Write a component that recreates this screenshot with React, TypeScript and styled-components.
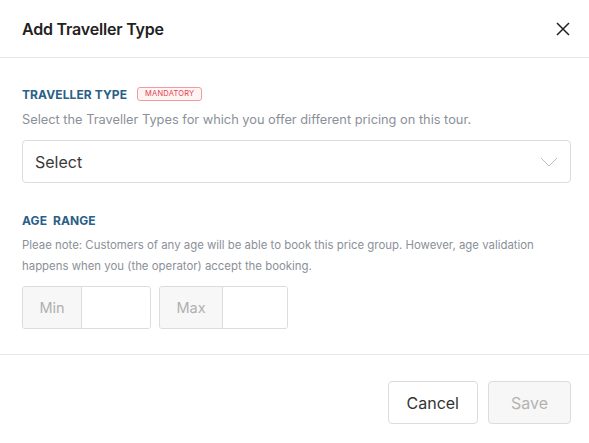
import styled, { createGlobalStyle } from "styled-components";

const Global = createGlobalStyle`
  html, body { margin: 0; background: #fff; }
  body { font-family: Inter, "Noto Sans", sans-serif; color: #222; }
`;

const Modal = styled.div`
  width: 589px;
  height: 443px;
  background: #fff;
  display: flex;
  flex-direction: column;
`;

const Header = styled.div`
  flex: none;
  height: 57px;
  display: flex;
  align-items: center;
  justify-content: space-between;
  padding: 0 19px 0 22px;
  border-bottom: 1px solid #e8e8e8;
`;

const Title = styled.h2`
  margin: 0;
  font-size: 16px;
  font-weight: 600;
  color: #222;
  letter-spacing: -0.2px;
`;

const Close = styled.button`
  border: 0;
  background: none;
  padding: 0;
  width: 14px;
  height: 14px;
  display: flex;
  cursor: pointer;
`;

const Body = styled.div`
  flex: none;
  padding: 28px 18px 0 22px;
  height: 297px;
  border-bottom: 1px solid #e8e8e8;
  box-sizing: border-box;
`;

const LabelRow = styled.div`
  display: flex;
  align-items: center;
  gap: 10px;
  height: 16px;
`;

const Label = styled.div`
  font-size: 12px;
  font-weight: 700;
  color: #2b5f86;
  letter-spacing: 0.1px;
`;

const Badge = styled.span`
  font-size: 7.5px;
  color: #e2424f;
  border: 1px solid #f39aa0;
  background: #fff4f4;
  border-radius: 3px;
  padding: 1px 7px;
  line-height: 10px;
  letter-spacing: 0.2px;
`;

const Help = styled.p<{ $size: number }>`
  margin: 7px 0 0;
  font-size: ${(p) => p.$size}px;
  line-height: 21px;
  color: #8b9099;
`;

const SelectBox = styled.div`
  margin-top: 10px;
  height: 43px;
  border: 1px solid #dcdcdc;
  border-radius: 4px;
  display: flex;
  align-items: center;
  justify-content: space-between;
  padding: 0 12px;
  box-sizing: border-box;
  font-size: 16px;
  color: #3a3a3a;
`;

const Section = styled.div<{ $top: number }>`
  margin-top: ${(p) => p.$top}px;
`;

const Ranges = styled.div`
  display: flex;
  gap: 8px;
  margin-top: 9px;
`;

const Group = styled.div`
  display: flex;
  width: 129px;
  height: 43px;
  border: 1px solid #dcdcdc;
  border-radius: 3px;
  box-sizing: border-box;
  overflow: hidden;
`;

const Addon = styled.div<{ $w: number }>`
  width: ${(p) => p.$w}px;
  background: #f7f7f7;
  border-right: 1px solid #dcdcdc;
  display: flex;
  align-items: center;
  justify-content: center;
  font-size: 14.5px;
  color: #b0b0b0;
`;

const Field = styled.input`
  flex: 1;
  min-width: 0;
  border: 0;
  outline: none;
`;

const Footer = styled.div`
  display: flex;
  justify-content: flex-end;
  gap: 10px;
  padding: 26px 18px 0;
`;

const Button = styled.button<{ $disabled?: boolean }>`
  height: 43px;
  padding: 0 ${(p) => (p.$disabled ? 22 : 18)}px;
  border: 1px solid #dcdcdc;
  border-radius: 4px;
  font-family: inherit;
  font-size: 16px;
  background: ${(p) => (p.$disabled ? "#f7f7f7" : "#fff")};
  color: ${(p) => (p.$disabled ? "#b3b3b3" : "#333")};
`;

export default function App() {
  return (
    <>
      <Global />
      <Modal>
        <Header>
          <Title>Add Traveller Type</Title>
          <Close aria-label="close">
            <svg width="14" height="14" viewBox="0 0 14 14">
              <path d="M1 1l12 12M13 1L1 13" stroke="#222" strokeWidth="1.5" fill="none" />
            </svg>
          </Close>
        </Header>
        <Body>
          <LabelRow>
            <Label>TRAVELLER TYPE</Label>
            <Badge>MANDATORY</Badge>
          </LabelRow>
          <Help $size={12.8}>Select the Traveller Types for which you offer different pricing on this tour.</Help>
          <SelectBox>
            Select
            <svg width="18" height="10" viewBox="0 0 18 10">
              <path d="M1 1l8 8 8-8" stroke="#bdbdbd" strokeWidth="1" fill="none" />
            </svg>
          </SelectBox>
          <Section $top={29}>
            <LabelRow>
              <Label>AGE&nbsp; RANGE</Label>
            </LabelRow>
            <Help $size={11.4}>
              Pleae note: Customers of any age will be able to book this price group. However, age validation
              happens when you (the operator) accept the booking.
            </Help>
            <Ranges>
              <Group>
                <Addon $w={58}>Min</Addon>
                <Field />
              </Group>
              <Group>
                <Addon $w={62}>Max</Addon>
                <Field />
              </Group>
            </Ranges>
          </Section>
        </Body>
        <Footer>
          <Button>Cancel</Button>
          <Button $disabled>Save</Button>
        </Footer>
      </Modal>
    </>
  );
}
